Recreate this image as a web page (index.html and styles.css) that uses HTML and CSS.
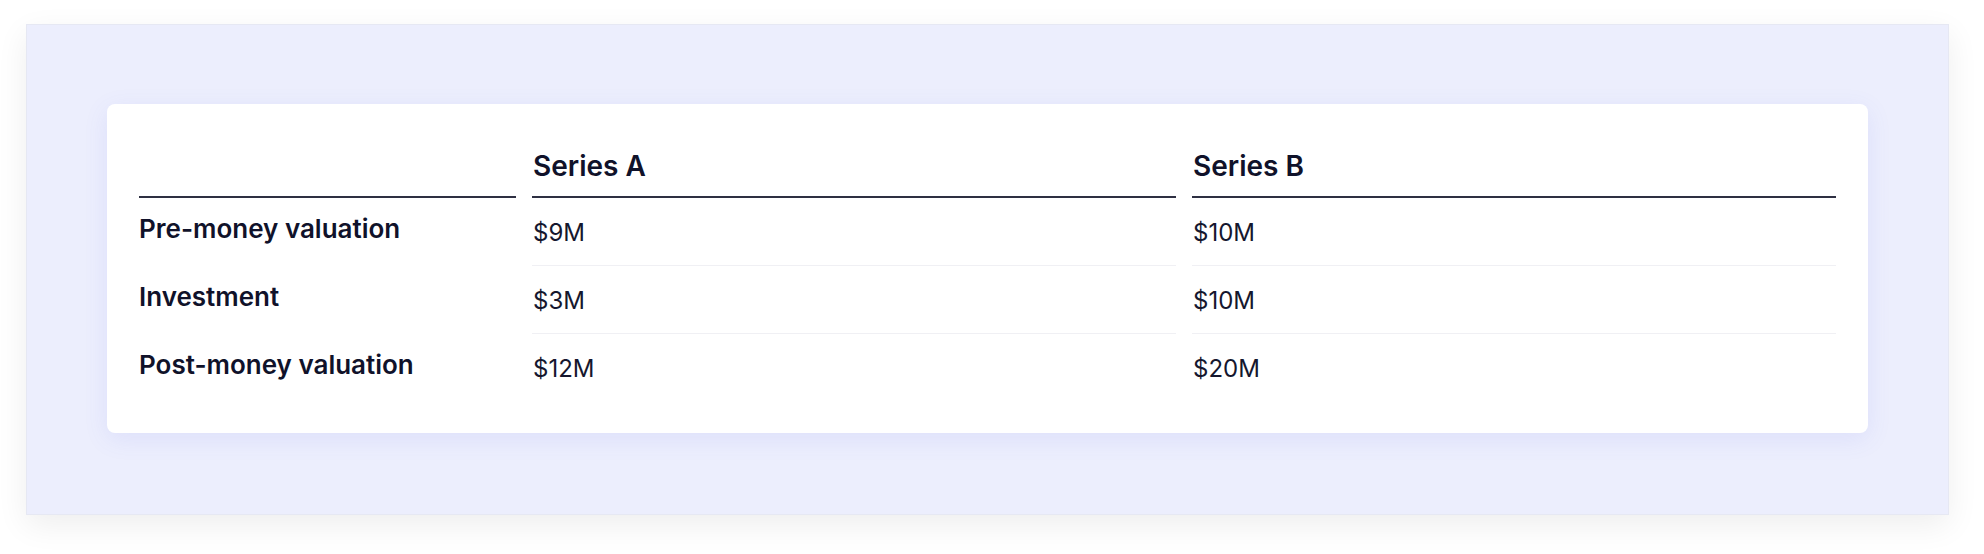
FILE: index.html
```html
<!DOCTYPE html>
<html lang="en">
<head>
<meta charset="utf-8">
<title>Funding rounds</title>
<link rel="stylesheet" href="styles.css">
</head>
<body>
<div class="frame">
  <div class="card">
    <div class="table">
      <div class="hcell"></div>
      <div class="hcell">Series A</div>
      <div class="hcell">Series B</div>

      <div class="rcell">Pre-money valuation</div>
      <div class="vcell">$9M</div>
      <div class="vcell">$10M</div>

      <div class="rcell">Investment</div>
      <div class="vcell">$3M</div>
      <div class="vcell">$10M</div>

      <div class="rcell last">Post-money valuation</div>
      <div class="vcell last">$12M</div>
      <div class="vcell last">$20M</div>
    </div>
  </div>
</div>
</body>
</html>
```
FILE: styles.css
```css
* { box-sizing: border-box; }

html, body {
  margin: 0;
  padding: 0;
  background: #ffffff;
}

body {
  font-family: Inter, "Noto Sans", "Liberation Sans", sans-serif;
  color: #10122a;
  padding: 24px 35px 39px 26px;
}

.frame {
  width: 1923px;
  height: 491px;
  background: #eceefd;
  border: 1px solid #e6e8f3;
  padding: 79px 80px 80px 80px;
  box-shadow: 0 10px 30px rgba(0, 0, 0, 0.07);
}

.card {
  background: #ffffff;
  border-radius: 8px;
  padding: 32px;
  box-shadow: 0 6px 24px rgba(90, 100, 230, 0.10);
}

.table {
  display: grid;
  grid-template-columns: 377px 1fr 1fr;
  grid-template-rows: 62px 68px 68px 67px;
  column-gap: 16px;
}

.hcell {
  display: flex;
  align-items: flex-end;
  border-bottom: 2px solid #2e3042;
  padding-bottom: 13px;
  padding-left: 1px;
  font-size: 28px;
  line-height: 34px;
  font-weight: 600;
}

.rcell {
  padding-top: 15px;
  font-size: 26px;
  line-height: 32px;
  font-weight: 600;
}

.vcell {
  padding-top: 20px;
  padding-left: 1px;
  font-size: 24px;
  line-height: 30px;
  font-weight: 400;
  color: #15172e;
  border-bottom: 1px solid #f0f0f4;
}

.vcell.last {
  border-bottom: none;
}
```
